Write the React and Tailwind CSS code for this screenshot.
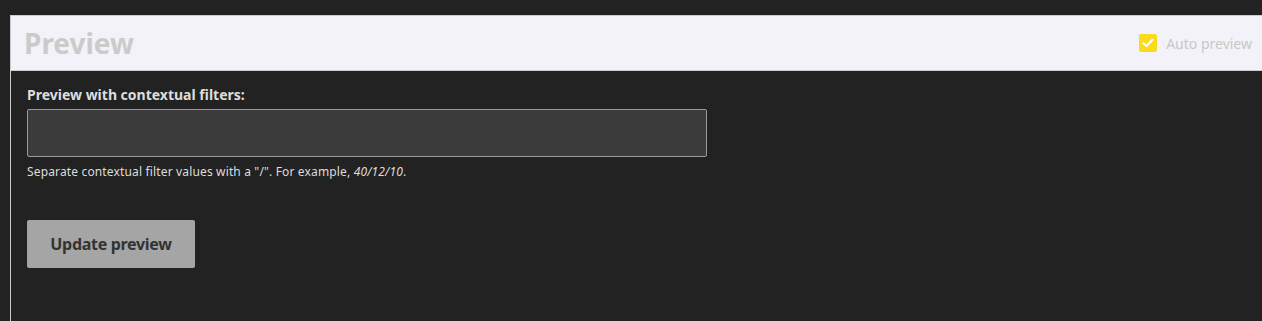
import React, { useState } from 'react'

const App = () => {
  const [autoPreview, setAutoPreview] = useState(true)
  const [args, setArgs] = useState('')

  return (
    <div
      className="min-h-[321px] bg-[#222222] pt-[15px] pl-[10px] overflow-hidden"
      style={{ fontFamily: '"Noto Sans", "Open Sans", sans-serif' }}
    >
      <div className="border-l border-t border-[#cccccc] min-h-[306px] flex flex-col">
        {/* Header */}
        <div className="h-[55px] bg-[#f3f2f8] border-b border-[#cccccc] flex items-center justify-between pl-[13px] pr-[10px]">
          <h2 className="text-[28px] font-bold text-[#cbcbcb] leading-none">Preview</h2>
          <label className="flex items-center gap-[9px] text-[14px] text-[#c8c8c8] cursor-pointer">
            <button
              type="button"
              onClick={() => setAutoPreview(!autoPreview)}
              className="w-[18px] h-[18px] rounded-[2px] bg-[#f8dc1c] flex items-center justify-center"
            >
              {autoPreview && (
                <svg width="12" height="10" viewBox="0 0 12 10" fill="none">
                  <path d="M1.5 5.2 L4.5 8 L10.5 1.8" stroke="white" strokeWidth="2.2" strokeLinecap="round" strokeLinejoin="round" />
                </svg>
              )}
            </button>
            <span>Auto preview</span>
          </label>
        </div>

        {/* Body */}
        <div className="flex-1 px-[16px] pt-[16px]">
          <label className="block text-[14px] font-bold text-[#dddddd] leading-[16px]">
            Preview with contextual filters:
          </label>
          <input
            value={args}
            onChange={(e) => setArgs(e.target.value)}
            className="mt-[6px] block w-[680px] h-[48px] bg-[#3b3b3b] border border-[#9a9a9a] rounded-[2px] outline-none text-white px-2"
          />
          <p className="mt-[7px] text-[12px] text-[#dcdcdc] leading-[16px] tracking-[0.15px]">
            Separate contextual filter values with a "/". For example, <em>40/12/10</em>.
          </p>
          <button
            type="button"
            className="mt-[40px] w-[168px] h-[48px] bg-[#a5a5a5] rounded-[2px] text-[16px] font-bold text-[#333333] tracking-[-0.3px]"
          >
            Update preview
          </button>
        </div>
      </div>
    </div>
  )
}

export default App
